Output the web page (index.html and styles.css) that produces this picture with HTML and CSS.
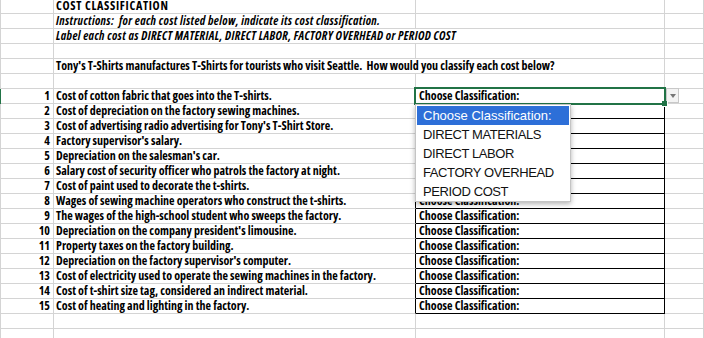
FILE: index.html
```html
<!DOCTYPE html>
<html>
<head>
    <meta charset="UTF-8" />
    <meta name="viewport" content="width=device-width, initial-scale=1.0" />
    <title>Cost Classification</title>
    <link rel="stylesheet" href="styles.css">
</head>
<body>
    <div class="sheet">
        <div class="cell top"></div><div class="cell top text title">COST CLASSIFICATION</div><div class="cell top"></div><div class="cell top"></div>
        <div class="cell"></div><div class="cell text italic">Instructions:&nbsp; for each cost listed below, indicate its cost classification.</div><div class="cell"></div><div class="cell"></div>
        <div class="cell"></div><div class="cell text italic span2">Label each cost as DIRECT MATERIAL, DIRECT LABOR, FACTORY OVERHEAD or PERIOD COST</div><div class="cell"></div>
        <div class="cell"></div><div class="cell"></div><div class="cell"></div><div class="cell"></div>
        <div class="cell"></div><div class="cell text span2">Tony's T-Shirts manufactures T-Shirts for tourists who visit Seattle.&nbsp; How would you classify each cost below?</div><div class="cell"></div>
        <div class="cell"></div><div class="cell"></div><div class="cell box-top"></div><div class="cell"></div>

        <div class="cell num row-sel">1</div><div class="cell text item">Cost of cotton fabric that goes into the T-shirts.</div>
        <div class="cell text choice active">
            Choose Classification:
            <span class="select-ring"></span>
            <span class="fill-handle"></span>
            <span class="drop-btn"><span class="caret"></span></span>
            <div class="menu">
                <div class="menu-item on">Choose Classification:</div>
                <div class="menu-item caps">DIRECT MATERIALS</div>
                <div class="menu-item caps">DIRECT LABOR</div>
                <div class="menu-item caps">FACTORY OVERHEAD</div>
                <div class="menu-item caps">PERIOD COST</div>
            </div>
        </div><div class="cell"></div>
        <div class="cell num">2</div><div class="cell text item">Cost of depreciation on the factory sewing machines.</div><div class="cell text choice">Choose Classification:</div><div class="cell"></div>
        <div class="cell num">3</div><div class="cell text item">Cost of advertising radio advertising for Tony's T-Shirt Store.</div><div class="cell text choice">Choose Classification:</div><div class="cell"></div>
        <div class="cell num">4</div><div class="cell text item">Factory supervisor's salary.</div><div class="cell text choice">Choose Classification:</div><div class="cell"></div>
        <div class="cell num">5</div><div class="cell text item">Depreciation on the salesman's car.</div><div class="cell text choice">Choose Classification:</div><div class="cell"></div>
        <div class="cell num">6</div><div class="cell text item">Salary cost of security officer who patrols the factory at night.</div><div class="cell text choice">Choose Classification:</div><div class="cell"></div>
        <div class="cell num">7</div><div class="cell text item">Cost of paint used to decorate the t-shirts.</div><div class="cell text choice">Choose Classification:</div><div class="cell"></div>
        <div class="cell num">8</div><div class="cell text item">Wages of sewing machine operators who construct the t-shirts.</div><div class="cell text choice">Choose Classification:</div><div class="cell"></div>
        <div class="cell num">9</div><div class="cell text item">The wages of the high-school student who sweeps the factory.</div><div class="cell text choice">Choose Classification:</div><div class="cell"></div>
        <div class="cell num">10</div><div class="cell text item">Depreciation on the company president's limousine.</div><div class="cell text choice">Choose Classification:</div><div class="cell"></div>
        <div class="cell num">11</div><div class="cell text item">Property taxes on the factory building.</div><div class="cell text choice">Choose Classification:</div><div class="cell"></div>
        <div class="cell num">12</div><div class="cell text item">Depreciation on the factory supervisor's computer.</div><div class="cell text choice">Choose Classification:</div><div class="cell"></div>
        <div class="cell num">13</div><div class="cell text item">Cost of electricity used to operate the sewing machines in the factory.</div><div class="cell text choice">Choose Classification:</div><div class="cell"></div>
        <div class="cell num">14</div><div class="cell text item">Cost of t-shirt size tag, considered an indirect material.</div><div class="cell text choice">Choose Classification:</div><div class="cell"></div>
        <div class="cell num">15</div><div class="cell text item">Cost of heating and lighting in the factory.</div><div class="cell text choice">Choose Classification:</div><div class="cell"></div>

        <div class="cell"></div><div class="cell"></div><div class="cell"></div><div class="cell"></div>
        <div class="cell"></div><div class="cell"></div><div class="cell"></div><div class="cell"></div>
    </div>
</body>
</html>
```
FILE: styles.css
```css
html, body {
    margin: 0;
    background: #fff;
    overflow: hidden;
}

.sheet {
    display: grid;
    grid-template-columns: 53px 362px 249px 1fr;
    grid-template-rows: 14px;
    grid-auto-rows: 15px;
    border-left: 1px solid #d4d4d4;
    font-family: "Open Sans", "Liberation Sans", sans-serif;
    font-stretch: condensed;
    font-size: 12px;
    font-weight: bold;
    color: #000;
}

.cell {
    position: relative;
    box-sizing: border-box;
    border-right: 1px solid #d4d4d4;
    border-bottom: 1px solid #d4d4d4;
    line-height: 14px;
    white-space: nowrap;
}

.cell.top {
    line-height: 12px;
}

.text {
    padding-left: 2px;
}

.title {
    letter-spacing: 0.7px;
}

.italic {
    font-style: italic;
    letter-spacing: 0.35px;
}

.span2 {
    grid-column: span 2;
}

.num {
    text-align: right;
    padding-right: 3px;
}

.row-sel {
    box-shadow: -1px 0 0 #217346;
}

.item {
    border-right-color: #000;
}

.box-top {
    border-bottom-color: #000;
}

.choice {
    padding-left: 3px;
    border-right-color: #000;
    border-bottom-color: #000;
}

/* selected cell */
.select-ring {
    position: absolute;
    left: -2px;
    top: -2px;
    width: 252px;
    height: 18px;
    box-sizing: border-box;
    border: 2px solid #217346;
}

.fill-handle {
    position: absolute;
    left: 246px;
    top: 12px;
    width: 5px;
    height: 5px;
    background: #217346;
    border-right: 1px solid #fff;
    border-bottom: 1px solid #fff;
    z-index: 2;
}

.drop-btn {
    position: absolute;
    left: 250px;
    top: -1px;
    width: 13px;
    height: 15px;
    box-sizing: border-box;
    border: 1px solid #c8c8c8;
    background: #f3f3f3;
    display: flex;
    align-items: center;
    justify-content: center;
}

.caret {
    width: 0;
    height: 0;
    border-left: 3px solid transparent;
    border-right: 3px solid transparent;
    border-top: 4px solid #767676;
}

/* validation list */
.menu {
    position: absolute;
    left: -1px;
    top: 15px;
    z-index: 5;
    width: 156px;
    box-sizing: border-box;
    padding: 1px 1px 0;
    background: #fff;
    border: 1px solid #c4c4c4;
    box-shadow: 0 2px 5px rgba(0, 0, 0, 0.3);
    font-family: "Liberation Sans", Arial, sans-serif;
    font-stretch: normal;
    font-size: 13px;
    font-weight: normal;
    color: #111;
}

.menu-item {
    height: 19px;
    line-height: 20px;
    padding-left: 6px;
}

.menu-item.on {
    background: #2d6fd8;
    color: #fff;
}

.caps {
    letter-spacing: -0.4px;
}
```
